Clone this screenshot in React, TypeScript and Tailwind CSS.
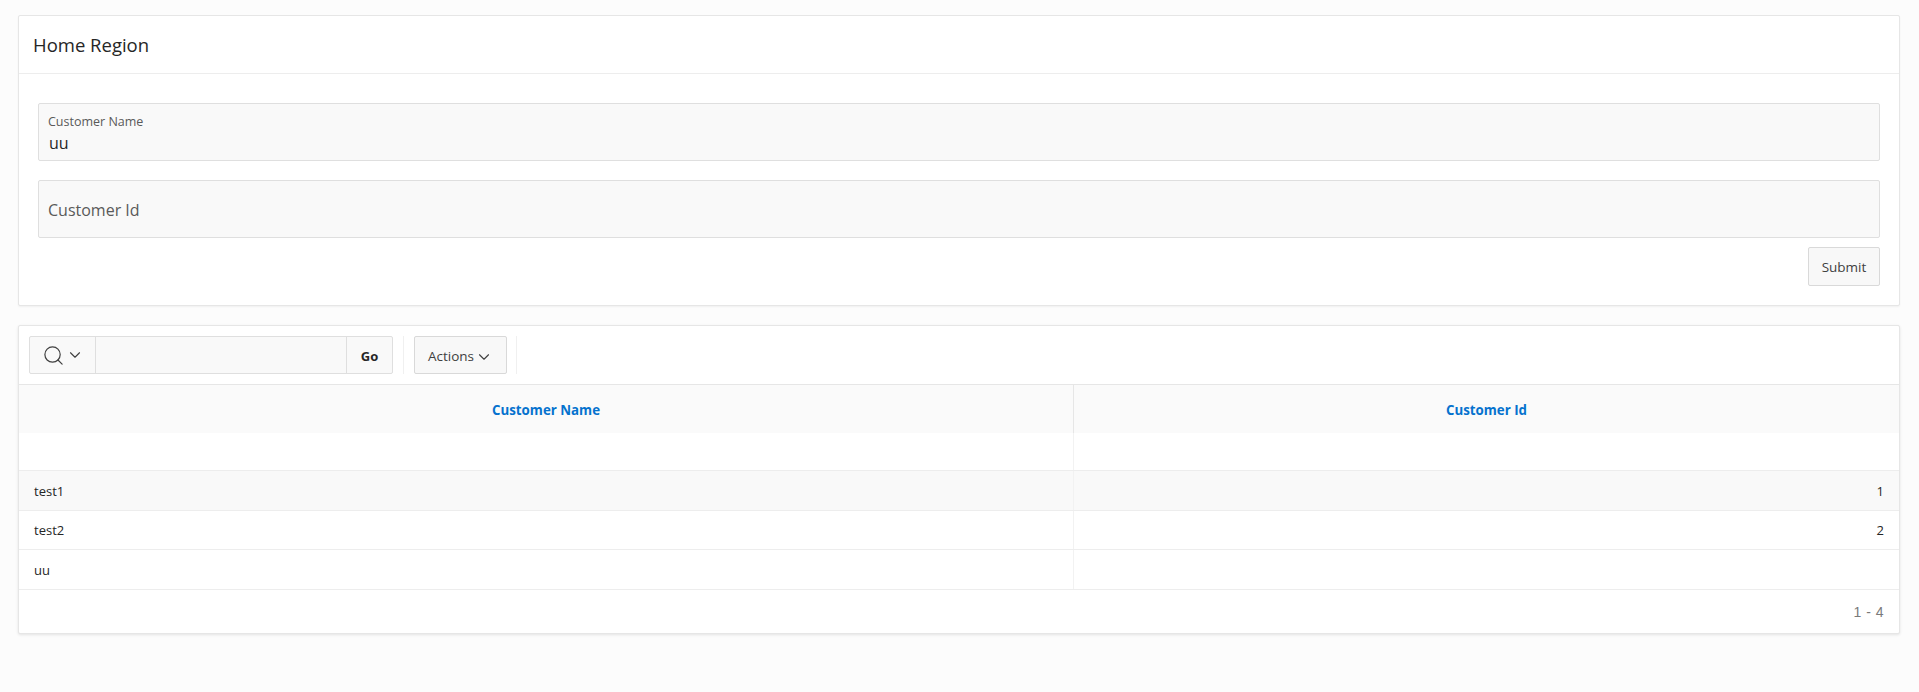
import { Search, ChevronDown } from 'lucide-react';

const rows = [
  { name: '', id: '', height: 'h-[38px]', bg: 'bg-white' },
  { name: 'test1', id: '1', height: 'h-[40px]', bg: 'bg-[#f9f9f9]' },
  { name: 'test2', id: '2', height: 'h-[39px]', bg: 'bg-white' },
  { name: 'uu', id: '', height: 'h-[40px]', bg: 'bg-white' },
];

export default function App() {
  return (
    <div className="min-h-[692px] bg-[#fcfcfc] pt-[15px] pl-[18px] pr-[19px] font-['Open_Sans',sans-serif] text-[#262626]">
      <section className="bg-white border border-[#e6e6e6] rounded-[2px] shadow-[0_1px_2px_rgba(0,0,0,0.05)] h-[291px]">
        <div className="h-[58px] flex items-center px-[14px] pt-[1px] border-b border-[#ededed]">
          <h2 className="text-[18.5px] leading-6">Home Region</h2>
        </div>
        <div className="pt-[29px] px-[19px]">
          <div className="h-[58px] bg-[#f9f9f9] border border-[#dfdfdf] rounded-[2px] px-[9px] pt-[10px]">
            <div className="text-[12.5px] leading-4 text-[#5a5a5a]">Customer Name</div>
            <div className="text-[16px] leading-5 mt-[3px] pl-px text-[#262626]">uu</div>
          </div>
          <div className="h-[58px] mt-[19px] bg-[#f9f9f9] border border-[#dfdfdf] rounded-[2px] px-[9px] pt-[2px] flex items-center">
            <span className="text-[16px] text-[#5a5a5a]">Customer Id</span>
          </div>
          <div className="flex justify-end mt-[9px]">
            <button className="w-[72px] h-[39px] pt-[2px] bg-[#f8f8f8] border border-[#d9d9d9] rounded-[2px] text-[13.5px] text-[#404040]">Submit</button>
          </div>
        </div>
      </section>

      <section className="mt-[19px] bg-white border border-[#e6e6e6] rounded-[2px] shadow-[0_1px_3px_rgba(0,0,0,0.1)]">
        <div className="h-[59px] flex items-center pl-[10px] border-b border-[#e6e6e6]">
          <div className="flex h-[38px] w-[364px] bg-[#f9f9f9] border border-[#dfdfdf] rounded-[2px]">
            <div className="w-[66px] flex items-center justify-center gap-[1px] pl-[1px] border-r border-[#dfdfdf] text-[#404040]">
              <Search className="w-[23px] h-[23px]" strokeWidth={1.25} />
              <ChevronDown className="w-[18px] h-[18px]" strokeWidth={1.5} />
            </div>
            <div className="flex-1" />
            <button className="w-[46px] pt-[3px] border-l border-[#dfdfdf] text-[13px] font-bold text-[#262626]">Go</button>
          </div>
          <div className="w-px h-[38px] bg-[#f0f0f0] ml-[10px]" />
          <button className="ml-[10px] w-[93px] h-[38px] pt-[3px] flex items-center justify-center gap-[1px] bg-[#f8f8f8] border border-[#d9d9d9] rounded-[2px] text-[13.5px] text-[#404040]">
            Actions
            <ChevronDown className="w-[18px] h-[18px]" strokeWidth={1.5} />
          </button>
          <div className="w-px h-[38px] bg-[#f0f0f0] ml-[9px]" />
        </div>

        <div className="flex h-[48px] bg-[#fafafa] text-[13.3px] font-bold text-[#0572ce]">
          <div className="w-[1055px] flex items-center justify-center border-r border-[#e6e6e6] pt-[3px]">Customer Name</div>
          <div className="flex-1 flex items-center justify-center pt-[3px]">Customer Id</div>
        </div>

        {rows.map((row, i) => (
          <div key={i} className={`flex text-[13px] border-b border-[#ededed] ${row.height} ${row.bg}`}>
            <div className="w-[1055px] flex items-center px-[15px] pt-[2px] border-r border-[#f2f2f2]">{row.name}</div>
            <div className="flex-1 flex items-center justify-end px-[15px] pt-[2px]">{row.id}</div>
          </div>
        ))}

        <div className="h-[43px] flex items-center justify-end pr-[15px] pt-[2px] text-[14px] tracking-[0.5px] text-[#7a7a7a] font-['Liberation_Sans',sans-serif]">
          1 - 4
        </div>
      </section>
    </div>
  );
}
